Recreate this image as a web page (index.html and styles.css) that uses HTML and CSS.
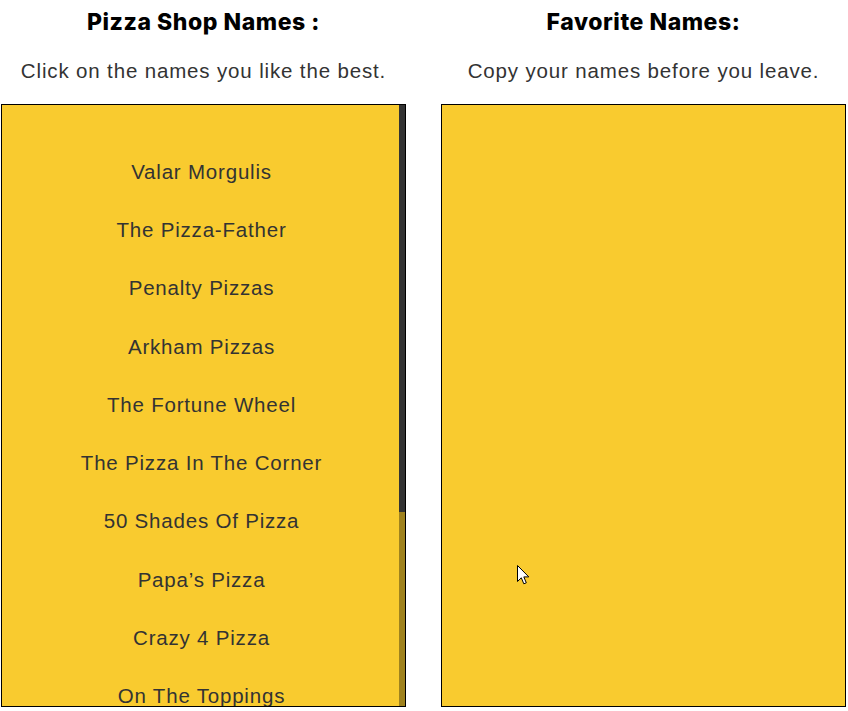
FILE: index.html
```html
<!DOCTYPE html>
<html lang="en">
<head>
<meta charset="utf-8">
<title>Pizza Shop Names</title>
<link rel="stylesheet" href="styles.css">
</head>
<body>
<div class="page">
  <section class="col">
    <h2 class="title">Pizza Shop Names :</h2>
    <p class="subtitle">Click on the names you like the best.</p>
    <div class="box listbox">
      <ul class="list">
        <li>Valar Morgulis</li>
        <li>The Pizza-Father</li>
        <li>Penalty Pizzas</li>
        <li>Arkham Pizzas</li>
        <li>The Fortune Wheel</li>
        <li>The Pizza In The Corner</li>
        <li>50 Shades Of Pizza</li>
        <li>Papa’s Pizza</li>
        <li>Crazy 4 Pizza</li>
        <li>On The Toppings</li>
        <li>Slice Of Heaven</li>
        <li>The Crust Club</li>
        <li>Pie Hard</li>
        <li>Pizza Pizzazz</li>
      </ul>
      <div class="scrollbar"><div class="thumb"></div></div>
    </div>
  </section>
  <section class="col">
    <h2 class="title">Favorite Names:</h2>
    <p class="subtitle">Copy your names before you leave.</p>
    <div class="box favorites"></div>
  </section>
</div>
<svg class="cursor" width="13" height="20" viewBox="0 0 13 20" aria-hidden="true">
  <path d="M0.5 0.5 L0.5 16.5 L4.3 12.8 L6.8 18.8 L9.3 17.8 L6.8 11.9 L11.8 11.9 Z" fill="#fff" stroke="#000" stroke-width="1" stroke-linejoin="miter"/>
</svg>
</body>
</html>
```

FILE: styles.css
```css
html, body {
  margin: 0;
  padding: 0;
  background: #ffffff;
}

body {
  font-family: "Liberation Sans", Arial, sans-serif;
  color: #333333;
  position: relative;
  height: 711px;
  overflow: hidden;
}

.page {
  display: flex;
  gap: 35px;
  padding-left: 1px;
}

.col {
  width: 405px;
  display: flex;
  flex-direction: column;
  align-items: center;
}

.title {
  margin: 9px 0 0;
  font-family: Inter, "Liberation Sans", sans-serif;
  font-weight: 800;
  font-size: 23px;
  line-height: 26px;
  color: #000000;
  letter-spacing: 0.55px;
}

.subtitle {
  margin: 24px 0 0;
  font-size: 20.5px;
  line-height: 24px;
  letter-spacing: 0.85px;
  color: #333333;
}

.box {
  box-sizing: border-box;
  width: 405px;
  height: 603px;
  margin: 21px 0 0;
  border: 1px solid #000000;
  background: #f9cb2f;
}

.listbox {
  position: relative;
  overflow: hidden;
}

.list {
  list-style: none;
  margin: 0;
  padding: 38px 4px 38px 0;
}

.list li {
  text-align: center;
  font-size: 20.5px;
  line-height: 58.22px;
  letter-spacing: 0.8px;
  color: #333333;
  cursor: pointer;
}

.scrollbar {
  position: absolute;
  top: 0;
  right: 0;
  bottom: 0;
  width: 6px;
  background: rgba(0, 0, 0, 0.36);
}

.thumb {
  height: 407px;
  background: #333333;
}

.cursor {
  position: absolute;
  left: 517px;
  top: 565px;
}
```
